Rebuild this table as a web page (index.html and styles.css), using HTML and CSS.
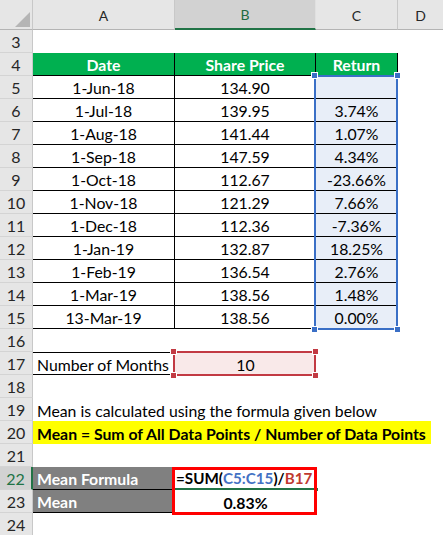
FILE: index.html
```html
<!DOCTYPE html>
<html>
<head>
<meta charset="utf-8">
<link rel="stylesheet" href="styles.css">
</head>
<body>
<div class="sheet">
  <div class="corner"><svg width="15" height="15" viewBox="0 0 15 15"><polygon points="15,0 15,15 0,15" fill="#b5b5b5"/></svg></div>
  <div class="ch">A</div>
  <div class="ch on">B</div>
  <div class="ch">C</div>
  <div class="ch last">D</div>

  <div class="rh">3</div><div class="c rest"></div>

  <div class="rh">4</div>
  <div class="c t hd">Date</div><div class="c t hd">Share Price</div><div class="c t hd">Return</div><div class="c"></div>

  <div class="rh">5</div>
  <div class="c t">1-Jun-18</div><div class="c t">134.90</div><div class="c t ret"></div><div class="c"></div>
  <div class="rh">6</div>
  <div class="c t">1-Jul-18</div><div class="c t">139.95</div><div class="c t ret">3.74%</div><div class="c"></div>
  <div class="rh">7</div>
  <div class="c t">1-Aug-18</div><div class="c t">141.44</div><div class="c t ret">1.07%</div><div class="c"></div>
  <div class="rh">8</div>
  <div class="c t">1-Sep-18</div><div class="c t">147.59</div><div class="c t ret">4.34%</div><div class="c"></div>
  <div class="rh">9</div>
  <div class="c t">1-Oct-18</div><div class="c t">112.67</div><div class="c t ret">-23.66%</div><div class="c"></div>
  <div class="rh">10</div>
  <div class="c t">1-Nov-18</div><div class="c t">121.29</div><div class="c t ret">7.66%</div><div class="c"></div>
  <div class="rh">11</div>
  <div class="c t">1-Dec-18</div><div class="c t">112.36</div><div class="c t ret">-7.36%</div><div class="c"></div>
  <div class="rh">12</div>
  <div class="c t">1-Jan-19</div><div class="c t">132.87</div><div class="c t ret">18.25%</div><div class="c"></div>
  <div class="rh">13</div>
  <div class="c t">1-Feb-19</div><div class="c t">136.54</div><div class="c t ret">2.76%</div><div class="c"></div>
  <div class="rh">14</div>
  <div class="c t">1-Mar-19</div><div class="c t">138.56</div><div class="c t ret">1.48%</div><div class="c"></div>
  <div class="rh">15</div>
  <div class="c t">13-Mar-19</div><div class="c t">138.56</div><div class="c t ret">0.00%</div><div class="c"></div>

  <div class="rh">16</div><div class="c rest"></div>

  <div class="rh">17</div>
  <div class="c left boxed">Number of Months</div><div class="c pink">10</div><div class="c rest2"></div>

  <div class="rh">18</div><div class="c rest"></div>

  <div class="rh">19</div><div class="c rest left">Mean is calculated using the formula given below</div>

  <div class="rh">20</div><div class="c rest left ywrap"><div class="yellow">Mean = Sum of All Data Points / Number of Data Points</div></div>

  <div class="rh">21</div><div class="c rest"></div>

  <div class="rh on">22</div>
  <div class="c left gray">Mean Formula</div>
  <div class="c left formula">=SUM(<span class="ref-b">C5:C15</span>)/<span class="ref-r">B17</span><span class="act-h"></span></div>
  <div class="c rest2"></div>

  <div class="rh">23</div>
  <div class="c left gray">Mean</div>
  <div class="c bold">0.83%</div>
  <div class="c rest2"></div>

  <div class="rh">24</div><div class="c rest"></div>

  <div class="sel-c">
    <span class="hd-b tl"></span><span class="hd-b tr"></span><span class="hd-b bl"></span><span class="hd-b br"></span>
  </div>
  <div class="sel-b17">
    <span class="hd-r tl"></span><span class="hd-r tr"></span><span class="hd-r bl"></span><span class="hd-r br"></span>
  </div>
  <div class="red-box"></div>
</div>
</body>
</html>
```

FILE: styles.css
```css
* {
  box-sizing: border-box;
  margin: 0;
  padding: 0;
}

body {
  margin: 0;
  width: 443px;
  height: 535px;
  overflow: hidden;
  background: #ffffff;
  font-family: Lato, "Liberation Sans", sans-serif;
  font-size: 15.8px;
  color: #000;
}

.sheet {
  position: relative;
  display: grid;
  grid-template-columns: 33px 142px 141px 82px 45px;
  grid-template-rows: 30px repeat(22, 23px);
}

.corner {
  background: #e6e6e6;
  border-right: 1px solid #c8c8c8;
  border-bottom: 1px solid #b4b4b4;
  display: flex;
  align-items: flex-end;
  justify-content: flex-end;
  padding: 0 2px 2px 0;
}

.ch {
  background: #e6e6e6;
  border-right: 1px solid #c8c8c8;
  border-bottom: 1px solid #b4b4b4;
  display: flex;
  align-items: center;
  justify-content: center;
  font-size: 14px;
  color: #262626;
  padding-top: 1px;
}

.ch.on {
  background: #d2d2d2;
  color: #1e6b41;
  border-bottom: 2px solid #217346;
  border-right-color: #e0e0e0;
}

.ch.last {
  border-right: none;
}

.rh {
  background: #e6e6e6;
  border-right: 1px solid #c8c8c8;
  border-bottom: 1px solid #d4d4d4;
  display: flex;
  align-items: center;
  justify-content: center;
  font-size: 16px;
  color: #262626;
  padding-top: 1px;
}

.rh.on {
  background: #d2d2d2;
  color: #217346;
  border-right: 2px solid #217346;
}

.c {
  display: flex;
  align-items: center;
  justify-content: center;
  white-space: nowrap;
  padding-top: 1px;
}

.rest {
  grid-column: 2 / -1;
}

.rest2 {
  grid-column: 4 / -1;
}

.left {
  justify-content: flex-start;
  padding-left: 4px;
}

.t {
  border-right: 1px solid #000;
  border-bottom: 1px solid #000;
}

.hd {
  background: #00b050;
  color: #ffffff;
  font-weight: 700;
}

.ret {
  background: #e8eef8;
}

.boxed {
  border-top: 1px solid #000;
  border-bottom: 1px solid #000;
}

.pink {
  background: #f9e9e9;
}

.ywrap {
  padding: 0;
}

.yellow {
  background: #ffff00;
  font-weight: 700;
  width: 398px;
  height: 23px;
  padding: 1px 0 0 4px;
  display: flex;
  align-items: center;
}

.gray {
  background: #808080;
  color: #ffffff;
  font-weight: 700;
  border-bottom: 1px solid #000;
}

.formula {
  position: relative;
  font-weight: 700;
  font-size: 15.2px;
  padding-left: 1px;
  border-bottom: 2px solid #217346;
}

.ref-b {
  color: #4472c4;
}

.ref-r {
  color: #c0392f;
}

.act-h {
  position: absolute;
  right: -3px;
  bottom: -4px;
  width: 5px;
  height: 5px;
  background: #217346;
  border: 1px solid #fff;
  z-index: 3;
}

.bold {
  font-weight: 700;
}

.sel-c {
  position: absolute;
  grid-column: 4 / 5;
  grid-row: 4 / 15;
  top: -1px;
  left: -2px;
  right: 0;
  bottom: -1px;
  border: 2px solid #3a6fc6;
  z-index: 2;
}

.sel-b17 {
  position: absolute;
  grid-column: 3 / 4;
  grid-row: 16 / 17;
  top: -1px;
  left: -2px;
  right: 0;
  bottom: -1px;
  border: 2px solid #c23a43;
  z-index: 2;
}

.hd-b,
.hd-r {
  position: absolute;
  width: 7px;
  height: 7px;
  border: 1px solid #ffffff;
}

.hd-b {
  background: #3a6fc6;
}

.hd-r {
  background: #c23a43;
}

.tl {
  left: -5px;
  top: -5px;
}

.tr {
  right: -5px;
  top: -5px;
}

.bl {
  left: -5px;
  bottom: -5px;
}

.br {
  right: -5px;
  bottom: -5px;
}

.red-box {
  position: absolute;
  grid-column: 3 / 4;
  grid-row: 21 / 23;
  top: 0;
  left: -3px;
  right: -1px;
  bottom: -2px;
  border: 3px solid #ff0000;
  z-index: 4;
}
```
